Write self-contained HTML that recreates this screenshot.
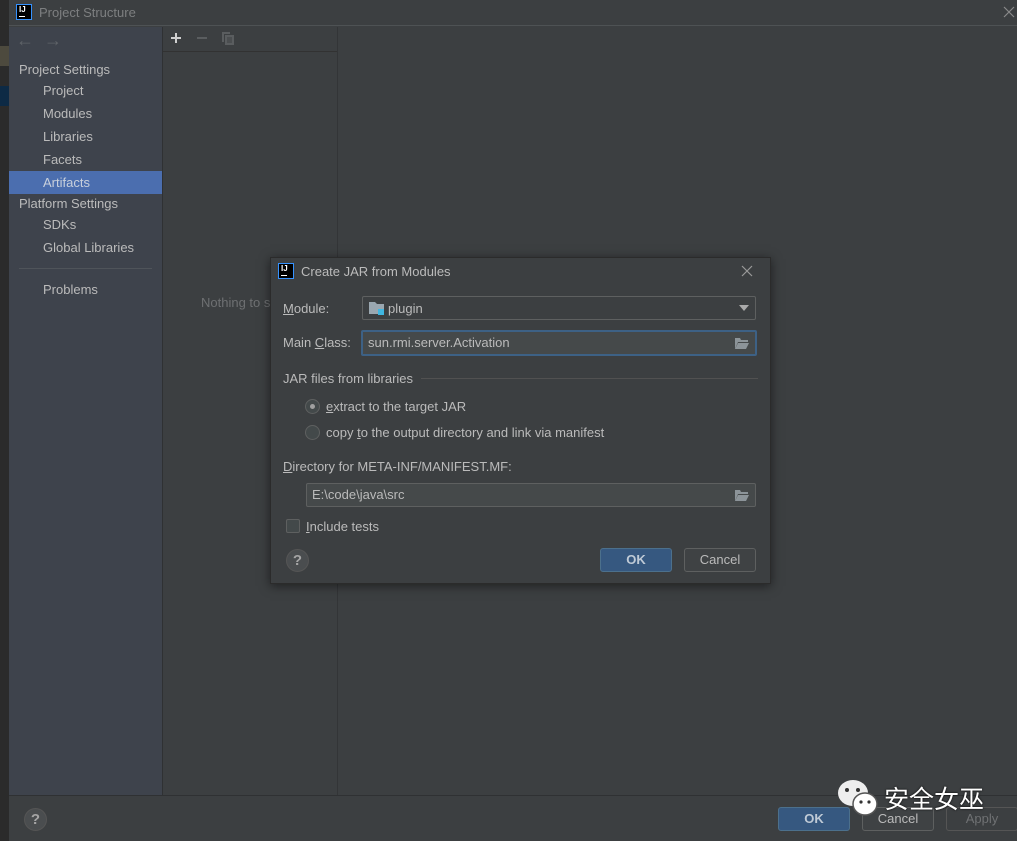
<!DOCTYPE html>
<html><head><meta charset="utf-8"><style>
*{margin:0;padding:0;box-sizing:border-box}
body{width:1017px;height:841px;overflow:hidden;background:#3c3f41;font-family:"Liberation Sans","Noto Sans CJK SC",sans-serif;font-size:13px;color:#bbbbbb;position:relative}
.a{position:absolute}
.ij{position:absolute;width:16px;height:16px;background:#000;border:1px solid #3592ff;color:#fff;font-size:8px;font-weight:bold;line-height:9px;padding-left:2px}
.ij:after{content:"";position:absolute;left:2px;bottom:2px;width:6px;height:1px;background:#fff}
.side div{position:absolute;white-space:nowrap}
u{text-decoration:underline}
.fld{position:absolute;background:#45494a;border:1px solid #5e6060;border-radius:2px}
.btn{position:absolute;border-radius:3px;text-align:center;line-height:22px}
</style></head><body>
<div class="a" style="left:0;top:0;width:9px;height:841px;background:#2b2b2b"></div>
<div class="a" style="left:0;top:46px;width:9px;height:20px;background:#4d4a3e"></div>
<div class="a" style="left:0;top:86px;width:9px;height:20px;background:#0d2a45"></div>
<div class="a" style="left:9px;top:0;width:1008px;height:26px;background:#3c3f41;border-bottom:1px solid #4e5254"></div>
<div class="ij" style="left:16px;top:4px">IJ</div>
<div class="a" style="left:39px;top:5px;color:#7d7f80;font-size:13px">Project Structure</div>
<svg class="a" style="left:1003px;top:6px" width="12" height="12"><path d="M1 1L11 11M11 1L1 11" stroke="#8a8a8a" stroke-width="1.2"/></svg>
<div class="a side" style="left:9px;top:27px;width:153px;height:768px;background:#3e434c">
<div style="left:7px;top:3px;color:#5f6368;font-size:18px">←&nbsp;&nbsp;→</div>
<div style="left:10px;top:35px">Project Settings</div>
<div style="left:34px;top:56px">Project</div>
<div style="left:34px;top:79px">Modules</div>
<div style="left:34px;top:102px">Libraries</div>
<div style="left:34px;top:125px">Facets</div>
<div style="left:0;top:144px;width:153px;height:23px;background:#4b6eaf"></div>
<div style="left:34px;top:148px;color:#c8d0dc">Artifacts</div>
<div style="left:10px;top:169px">Platform Settings</div>
<div style="left:34px;top:190px">SDKs</div>
<div style="left:34px;top:213px">Global Libraries</div>
<div style="left:10px;top:241px;width:133px;height:1px;background:#4f545a"></div>
<div style="left:34px;top:255px">Problems</div>
</div>
<div class="a" style="left:162px;top:27px;width:1px;height:768px;background:#2f3133"></div>
<div class="a" style="left:337px;top:27px;width:1px;height:768px;background:#333537"></div>
<div class="a" style="left:163px;top:51px;width:174px;height:1px;background:#323232"></div>
<svg class="a" style="left:170px;top:32px" width="12" height="12"><path d="M6 1V11M1 6H11" stroke="#d0d0d0" stroke-width="2"/></svg>
<svg class="a" style="left:196px;top:32px" width="12" height="12"><path d="M1 6H11" stroke="#5a5d5f" stroke-width="2"/></svg>
<svg class="a" style="left:221px;top:31px" width="14" height="15"><path d="M1 1h8v2H3v8H1z" fill="#5a5d5f"/><rect x="4" y="4" width="9" height="10" fill="#5a5d5f"/><path d="M6 7h5M6 9h5M6 11h5" stroke="#3c3f41"/></svg>
<div class="a" style="left:201px;top:295px;color:#6e7072">Nothing to s</div>
<div class="a" style="left:9px;top:795px;width:1008px;height:1px;background:#2f3133"></div>
<div class="a" style="left:24px;top:808px;width:23px;height:23px;border-radius:50%;background:#4a4d4f;border:1px solid #555;color:#a5a5a5;text-align:center;line-height:21px;font-weight:bold;font-size:15px">?</div>
<div class="btn" style="left:778px;top:807px;width:72px;height:24px;background:#365880;border:1px solid #4c708c;color:#bfcad6;font-weight:bold">OK</div>
<div class="btn" style="left:862px;top:807px;width:72px;height:24px;background:#3f4244;border:1px solid #5e6060">Cancel</div>
<div class="btn" style="left:946px;top:807px;width:72px;height:24px;background:#3c3f41;border:1px solid #555;color:#6f7173">Apply</div>
<svg class="a" style="left:836px;top:776px" width="46" height="44"><ellipse cx="17" cy="17" rx="15" ry="13" fill="#eee"/><circle cx="11" cy="14" r="2" fill="#333"/><circle cx="22" cy="14" r="2" fill="#333"/><ellipse cx="29" cy="28" rx="12" ry="11" fill="#fff" stroke="#555" stroke-width="1.5"/><circle cx="25" cy="26" r="1.6" fill="#333"/><circle cx="33" cy="26" r="1.6" fill="#333"/></svg>
<div class="a" style="left:884px;top:780px;color:#fff;font-size:25px;font-family:'Noto Sans CJK SC',sans-serif;text-shadow:0 0 2px #000">安全女巫</div>

<div class="a" style="left:270px;top:257px;width:501px;height:327px;background:#3c3f41;border:1px solid #2b2b2b;box-shadow:0 2px 10px rgba(0,0,0,.5)"></div>
<div class="ij" style="left:278px;top:263px">IJ</div>
<div class="a" style="left:301px;top:264px">Create JAR from Modules</div>
<svg class="a" style="left:741px;top:265px" width="12" height="12"><path d="M1 1L11 11M11 1L1 11" stroke="#9a9a9a" stroke-width="1.2"/></svg>
<div class="a" style="left:283px;top:301px"><u>M</u>odule:</div>
<div class="fld" style="left:362px;top:296px;width:394px;height:24px;background:#3c3f41"></div>
<svg class="a" style="left:368px;top:300px" width="18" height="16"><path d="M1 2h6l2 2h7v10H1z" fill="#9aa7b0"/><rect x="10" y="9" width="6" height="6" fill="#40b6e0"/></svg>
<div class="a" style="left:388px;top:301px">plugin</div>
<div class="a" style="left:739px;top:305px;width:0;height:0;border-left:5px solid transparent;border-right:5px solid transparent;border-top:6px solid #aaa"></div>
<div class="a" style="left:283px;top:335px">Main <u>C</u>lass:</div>
<div class="fld" style="left:361px;top:330px;width:396px;height:26px;border:2px solid #3d6185"></div>
<div class="a" style="left:368px;top:335px">sun.rmi.server.Activation</div>
<svg class="a" style="left:734px;top:337px" width="16" height="13"><path d="M1 1h5l1 2h7v2H4L1 12z" fill="#8c9499"/><path d="M4 6h11l-3 6H1z" fill="#8c9499"/></svg>
<div class="a" style="left:283px;top:371px">JAR files from libraries</div>
<div class="a" style="left:421px;top:378px;width:337px;height:1px;background:#515151"></div>
<div class="a" style="left:305px;top:399px;width:15px;height:15px;border-radius:50%;border:1px solid #5e6060;background:#43494a"></div>
<div class="a" style="left:310px;top:404px;width:5px;height:5px;border-radius:50%;background:#a0a0a0"></div>
<div class="a" style="left:326px;top:399px"><u>e</u>xtract to the target JAR</div>
<div class="a" style="left:305px;top:425px;width:15px;height:15px;border-radius:50%;border:1px solid #5e6060;background:#43494a"></div>
<div class="a" style="left:326px;top:425px">copy <u>t</u>o the output directory and link via manifest</div>
<div class="a" style="left:283px;top:459px"><u>D</u>irectory for META-INF/MANIFEST.MF:</div>
<div class="fld" style="left:306px;top:483px;width:450px;height:24px"></div>
<div class="a" style="left:312px;top:487px">E:\code\java\src</div>
<svg class="a" style="left:734px;top:489px" width="16" height="13"><path d="M1 1h5l1 2h7v2H4L1 12z" fill="#8c9499"/><path d="M4 6h11l-3 6H1z" fill="#8c9499"/></svg>
<div class="a" style="left:286px;top:519px;width:14px;height:14px;border:1px solid #5e6060;border-radius:2px;background:#43494a"></div>
<div class="a" style="left:306px;top:519px"><u>I</u>nclude tests</div>
<div class="a" style="left:286px;top:549px;width:23px;height:23px;border-radius:50%;background:#4a4d4f;border:1px solid #555;color:#a5a5a5;text-align:center;line-height:21px;font-weight:bold;font-size:15px">?</div>
<div class="btn" style="left:600px;top:548px;width:72px;height:24px;background:#365880;border:1px solid #4c708c;color:#bfcad6;font-weight:bold">OK</div>
<div class="btn" style="left:684px;top:548px;width:72px;height:24px;background:#3f4244;border:1px solid #5e6060">Cancel</div>
</body></html>
